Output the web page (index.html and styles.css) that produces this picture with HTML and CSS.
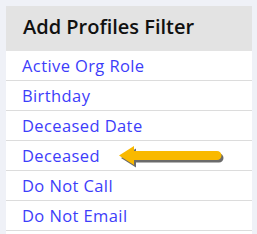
FILE: index.html
```html
<!DOCTYPE html>
<html lang="en">
<head>
  <meta charset="UTF-8" />
  <title>Add Profiles Filter</title>
  <link rel="stylesheet" href="styles.css">
</head>
<body>
  <div class="panel">
    <div class="panel-head">Add Profiles Filter</div>
    <ul class="filter-list">
      <li><a href="#">Active Org Role</a></li>
      <li><a href="#">Birthday</a></li>
      <li><a href="#">Deceased Date</a></li>
      <li class="marked">
        <a href="#">Deceased</a>
        <svg class="arrow" width="108" height="26" viewBox="0 0 108 26">
          <g transform="translate(2 2.5)" fill="#3a3a3a" opacity="0.75">
            <path d="M1 10.5 L16 1 L16 6 L99 6 A4.5 4.5 0 0 1 99 15 L16 15 L16 20 Z" />
          </g>
          <path fill="#f9b900" d="M1 10.5 L16 1 L16 6 L99 6 A4.5 4.5 0 0 1 99 15 L16 15 L16 20 Z" />
        </svg>
      </li>
      <li><a href="#">Do Not Call</a></li>
      <li><a href="#">Do Not Email</a></li>
    </ul>
  </div>
</body>
</html>
```

FILE: styles.css
```css
* {
  box-sizing: border-box;
}

body {
  margin: 0;
  padding: 6px 5px 0 6px;
  background: #eff1f7;
  font-family: 'Open Sans', 'Noto Sans', sans-serif;
}

.panel {
  background: #fff;
  height: 228px;
  overflow: hidden;
}

.panel-head {
  background: #e3e3e3;
  height: 45px;
  padding: 7px 0 0 17px;
  font-size: 20px;
  font-weight: 600;
  color: #111;
}

.filter-list {
  list-style: none;
  margin: 0;
  padding: 0;
}

.filter-list li {
  height: 30px;
  border-bottom: 1px solid #dcdcdc;
  padding: 3px 0 0 16px;
  display: flex;
  align-items: flex-start;
}

.filter-list a {
  color: #3d3dfa;
  text-decoration: none;
  font-size: 16.5px;
  letter-spacing: 0.4px;
}

.arrow {
  margin: 1px 0 0 18px;
}
```
